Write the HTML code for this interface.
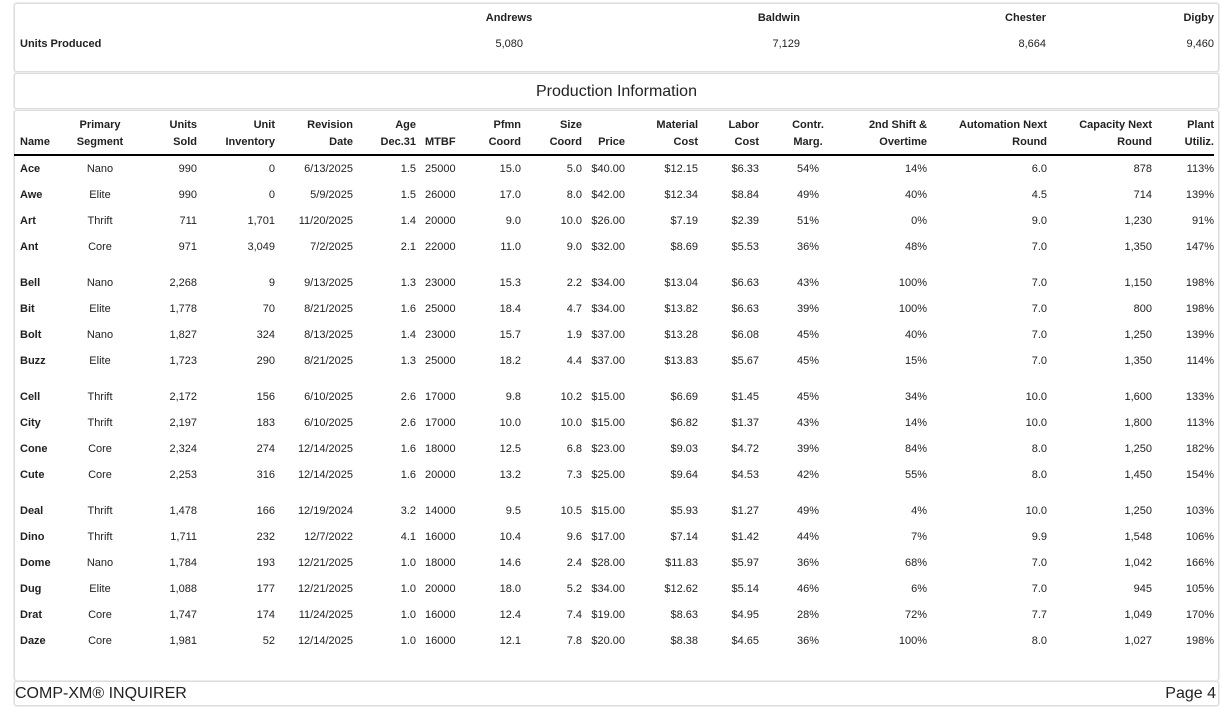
<!DOCTYPE html>
<html><head><meta charset="utf-8"><style>
body{margin:0;background:#fff;font-family:"Liberation Sans",Arial,sans-serif;color:#222;width:1229px;height:726px;overflow:hidden;position:relative}
.box{position:absolute;left:14px;width:1203px;border:1px solid #ddd;border-radius:3px;box-shadow:0 0 0 1px #ececec;background:#fff}
.t{position:absolute;font-size:11px;white-space:nowrap}
.b{font-weight:bold}
table{position:absolute;left:-1px;top:0;border-collapse:collapse;table-layout:fixed;width:1200px;font-size:11px}
td,th{padding:0;white-space:nowrap;text-align:right;overflow:visible}
th{font-weight:bold;line-height:17px;padding:6px 0 3px;vertical-align:bottom}
thead tr{border-bottom:2px solid #000}
tbody td{height:26px;line-height:26px}
tr.sp td{height:10px;line-height:10px}
.l{text-align:left;padding-left:6px}
.c{text-align:center}
td:first-child{font-weight:bold}
</style></head><body>
<div class="box" style="top:3px;height:67px">
<div class="t b" style="left:469px;top:8px;width:50px;text-align:center">Andrews</div>
<div class="t b" style="right:418px;top:8px">Baldwin</div>
<div class="t b" style="right:172px;top:8px">Chester</div>
<div class="t b" style="right:4px;top:8px">Digby</div>
<div class="t b" style="left:5px;top:34px">Units Produced</div>
<div class="t" style="right:695px;top:34px">5,080</div>
<div class="t" style="right:418px;top:34px">7,129</div>
<div class="t" style="right:172px;top:34px">8,664</div>
<div class="t" style="right:4px;top:34px">9,460</div>
</div>
<div class="box" style="top:73px;height:34px">
<div class="t" style="left:0;width:1203px;text-align:center;top:9px;font-size:16px">Production Information</div>
</div>
<div class="box" style="top:110px;height:569px">
<table>
<colgroup><col style="width:46px"><col style="width:80px"><col style="width:57px"><col style="width:78px"><col style="width:78px"><col style="width:63px"><col style="width:54px"><col style="width:51px"><col style="width:61px"><col style="width:43px"><col style="width:73px"><col style="width:61px"><col style="width:98px"><col style="width:70px"><col style="width:120px"><col style="width:105px"><col style="width:62px"></colgroup>
<thead><tr><th class="l">Name</th><th class="c">Primary<br>Segment</th><th>Units<br>Sold</th><th>Unit<br>Inventory</th><th>Revision<br>Date</th><th>Age<br>Dec.31</th><th class="l" style="padding-left:9px">MTBF</th><th>Pfmn<br>Coord</th><th>Size<br>Coord</th><th>Price</th><th>Material<br>Cost</th><th>Labor<br>Cost</th><th class="c">Contr.<br>Marg.</th><th>2nd Shift &amp;<br>Overtime</th><th>Automation Next<br>Round</th><th>Capacity Next<br>Round</th><th>Plant<br>Utiliz.</th></tr></thead>
<tbody>
<tr><td class="l">Ace</td><td class="c">Nano</td><td>990</td><td>0</td><td>6/13/2025</td><td>1.5</td><td class="l" style="padding-left:9px">25000</td><td>15.0</td><td>5.0</td><td>$40.00</td><td>$12.15</td><td>$6.33</td><td class="c">54%</td><td>14%</td><td>6.0</td><td>878</td><td>113%</td></tr>
<tr><td class="l">Awe</td><td class="c">Elite</td><td>990</td><td>0</td><td>5/9/2025</td><td>1.5</td><td class="l" style="padding-left:9px">26000</td><td>17.0</td><td>8.0</td><td>$42.00</td><td>$12.34</td><td>$8.84</td><td class="c">49%</td><td>40%</td><td>4.5</td><td>714</td><td>139%</td></tr>
<tr><td class="l">Art</td><td class="c">Thrift</td><td>711</td><td>1,701</td><td>11/20/2025</td><td>1.4</td><td class="l" style="padding-left:9px">20000</td><td>9.0</td><td>10.0</td><td>$26.00</td><td>$7.19</td><td>$2.39</td><td class="c">51%</td><td>0%</td><td>9.0</td><td>1,230</td><td>91%</td></tr>
<tr><td class="l">Ant</td><td class="c">Core</td><td>971</td><td>3,049</td><td>7/2/2025</td><td>2.1</td><td class="l" style="padding-left:9px">22000</td><td>11.0</td><td>9.0</td><td>$32.00</td><td>$8.69</td><td>$5.53</td><td class="c">36%</td><td>48%</td><td>7.0</td><td>1,350</td><td>147%</td></tr>
<tr class="sp"><td colspan="17"></td></tr>
<tr><td class="l">Bell</td><td class="c">Nano</td><td>2,268</td><td>9</td><td>9/13/2025</td><td>1.3</td><td class="l" style="padding-left:9px">23000</td><td>15.3</td><td>2.2</td><td>$34.00</td><td>$13.04</td><td>$6.63</td><td class="c">43%</td><td>100%</td><td>7.0</td><td>1,150</td><td>198%</td></tr>
<tr><td class="l">Bit</td><td class="c">Elite</td><td>1,778</td><td>70</td><td>8/21/2025</td><td>1.6</td><td class="l" style="padding-left:9px">25000</td><td>18.4</td><td>4.7</td><td>$34.00</td><td>$13.82</td><td>$6.63</td><td class="c">39%</td><td>100%</td><td>7.0</td><td>800</td><td>198%</td></tr>
<tr><td class="l">Bolt</td><td class="c">Nano</td><td>1,827</td><td>324</td><td>8/13/2025</td><td>1.4</td><td class="l" style="padding-left:9px">23000</td><td>15.7</td><td>1.9</td><td>$37.00</td><td>$13.28</td><td>$6.08</td><td class="c">45%</td><td>40%</td><td>7.0</td><td>1,250</td><td>139%</td></tr>
<tr><td class="l">Buzz</td><td class="c">Elite</td><td>1,723</td><td>290</td><td>8/21/2025</td><td>1.3</td><td class="l" style="padding-left:9px">25000</td><td>18.2</td><td>4.4</td><td>$37.00</td><td>$13.83</td><td>$5.67</td><td class="c">45%</td><td>15%</td><td>7.0</td><td>1,350</td><td>114%</td></tr>
<tr class="sp"><td colspan="17"></td></tr>
<tr><td class="l">Cell</td><td class="c">Thrift</td><td>2,172</td><td>156</td><td>6/10/2025</td><td>2.6</td><td class="l" style="padding-left:9px">17000</td><td>9.8</td><td>10.2</td><td>$15.00</td><td>$6.69</td><td>$1.45</td><td class="c">45%</td><td>34%</td><td>10.0</td><td>1,600</td><td>133%</td></tr>
<tr><td class="l">City</td><td class="c">Thrift</td><td>2,197</td><td>183</td><td>6/10/2025</td><td>2.6</td><td class="l" style="padding-left:9px">17000</td><td>10.0</td><td>10.0</td><td>$15.00</td><td>$6.82</td><td>$1.37</td><td class="c">43%</td><td>14%</td><td>10.0</td><td>1,800</td><td>113%</td></tr>
<tr><td class="l">Cone</td><td class="c">Core</td><td>2,324</td><td>274</td><td>12/14/2025</td><td>1.6</td><td class="l" style="padding-left:9px">18000</td><td>12.5</td><td>6.8</td><td>$23.00</td><td>$9.03</td><td>$4.72</td><td class="c">39%</td><td>84%</td><td>8.0</td><td>1,250</td><td>182%</td></tr>
<tr><td class="l">Cute</td><td class="c">Core</td><td>2,253</td><td>316</td><td>12/14/2025</td><td>1.6</td><td class="l" style="padding-left:9px">20000</td><td>13.2</td><td>7.3</td><td>$25.00</td><td>$9.64</td><td>$4.53</td><td class="c">42%</td><td>55%</td><td>8.0</td><td>1,450</td><td>154%</td></tr>
<tr class="sp"><td colspan="17"></td></tr>
<tr><td class="l">Deal</td><td class="c">Thrift</td><td>1,478</td><td>166</td><td>12/19/2024</td><td>3.2</td><td class="l" style="padding-left:9px">14000</td><td>9.5</td><td>10.5</td><td>$15.00</td><td>$5.93</td><td>$1.27</td><td class="c">49%</td><td>4%</td><td>10.0</td><td>1,250</td><td>103%</td></tr>
<tr><td class="l">Dino</td><td class="c">Thrift</td><td>1,711</td><td>232</td><td>12/7/2022</td><td>4.1</td><td class="l" style="padding-left:9px">16000</td><td>10.4</td><td>9.6</td><td>$17.00</td><td>$7.14</td><td>$1.42</td><td class="c">44%</td><td>7%</td><td>9.9</td><td>1,548</td><td>106%</td></tr>
<tr><td class="l">Dome</td><td class="c">Nano</td><td>1,784</td><td>193</td><td>12/21/2025</td><td>1.0</td><td class="l" style="padding-left:9px">18000</td><td>14.6</td><td>2.4</td><td>$28.00</td><td>$11.83</td><td>$5.97</td><td class="c">36%</td><td>68%</td><td>7.0</td><td>1,042</td><td>166%</td></tr>
<tr><td class="l">Dug</td><td class="c">Elite</td><td>1,088</td><td>177</td><td>12/21/2025</td><td>1.0</td><td class="l" style="padding-left:9px">20000</td><td>18.0</td><td>5.2</td><td>$34.00</td><td>$12.62</td><td>$5.14</td><td class="c">46%</td><td>6%</td><td>7.0</td><td>945</td><td>105%</td></tr>
<tr><td class="l">Drat</td><td class="c">Core</td><td>1,747</td><td>174</td><td>11/24/2025</td><td>1.0</td><td class="l" style="padding-left:9px">16000</td><td>12.4</td><td>7.4</td><td>$19.00</td><td>$8.63</td><td>$4.95</td><td class="c">28%</td><td>72%</td><td>7.7</td><td>1,049</td><td>170%</td></tr>
<tr><td class="l">Daze</td><td class="c">Core</td><td>1,981</td><td>52</td><td>12/14/2025</td><td>1.0</td><td class="l" style="padding-left:9px">16000</td><td>12.1</td><td>7.8</td><td>$20.00</td><td>$8.38</td><td>$4.65</td><td class="c">36%</td><td>100%</td><td>8.0</td><td>1,027</td><td>198%</td></tr>
</tbody></table>
</div>
<div class="box" style="top:681px;height:23px">
<div class="t" style="left:0;top:3px;font-size:16px">COMP-XM® INQUIRER</div>
<div class="t" style="right:2px;top:3px;font-size:16px">Page 4</div>
</div>
</body></html>
